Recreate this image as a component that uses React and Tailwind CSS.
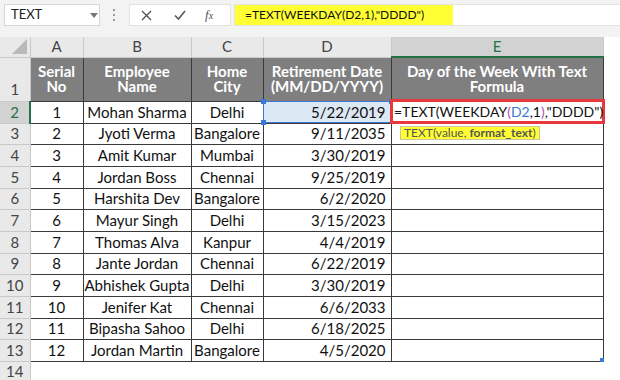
import React from 'react';

const rows = [
    [1, 'Mohan Sharma', 'Delhi', '5/22/2019'],
    [2, 'Jyoti Verma', 'Bangalore', '9/11/2035'],
    [3, 'Amit Kumar', 'Mumbai', '3/30/2019'],
    [4, 'Jordan Boss', 'Chennai', '9/25/2019'],
    [5, 'Harshita Dev', 'Bangalore', '6/2/2020'],
    [6, 'Mayur Singh', 'Delhi', '3/15/2023'],
    [7, 'Thomas Alva', 'Kanpur', '4/4/2019'],
    [8, 'Jante Jordan', 'Chennai', '6/22/2019'],
    [9, 'Abhishek Gupta', 'Delhi', '3/30/2019'],
    [10, 'Jenifer Kat', 'Chennai', '6/6/2033'],
    [11, 'Bipasha Sahoo', 'Delhi', '6/18/2025'],
    [12, 'Jordan Martin', 'Bangalore', '4/5/2020'],
];

const heights = ['h-[22px]', 'h-[21px]', 'h-[22px]', 'h-[22px]', 'h-[21px]', 'h-[22px]', 'h-[22px]', 'h-[21px]', 'h-[22px]', 'h-[22px]', 'h-[21px]', 'h-[22px]'];

const cell = 'border border-[#3a3a3a] px-0 py-0 leading-none';

const FormulaBar = () => (
    <div className="h-[37px] bg-[#f3f3f3] relative">
        {/* name box */}
        <div className="absolute left-[4px] top-[4px] w-[96px] h-[22px] bg-white border border-[#d6d6d6] flex items-center pl-[6px] text-[13px] text-[#222]">
            TEXT
            <svg className="absolute left-[85px] top-[8px]" width="8" height="5" viewBox="0 0 8 5"><path d="M0 0h8L4 5z" fill="#777" /></svg>
        </div>
        {/* dots */}
        <div className="absolute left-[113px] top-[9px] flex flex-col gap-[3px]">
            <span className="w-[2px] h-[2px] bg-[#9a9a9a]" />
            <span className="w-[2px] h-[2px] bg-[#9a9a9a]" />
            <span className="w-[2px] h-[2px] bg-[#9a9a9a]" />
        </div>
        {/* buttons */}
        <div className="absolute left-[129px] top-[4px] w-[102px] h-[22px] bg-white border border-[#e2e2e2] flex items-center">
            <svg className="ml-[11px]" width="11" height="11" viewBox="0 0 11 11"><path d="M1 1l9 9M10 1l-9 9" stroke="#555" strokeWidth="1.4" /></svg>
            <svg className="ml-[22px]" width="12" height="10" viewBox="0 0 12 10"><path d="M1 5.5l3.5 3.5L11 1" stroke="#555" strokeWidth="1.6" fill="none" /></svg>
            <span className="ml-[19px] text-[13px] text-[#555] italic" style={{ fontFamily: '"Liberation Serif", serif' }}>f<span className="text-[10px]">x</span></span>
        </div>
        {/* formula input */}
        <div className="absolute left-[234px] right-0 top-[4px] h-[22px] bg-white border-y border-l border-[#e2e2e2] flex items-center">
            <div className="h-full w-[218px] bg-[#ffff33] flex items-center pl-[10px] text-[12px] text-[#111] whitespace-nowrap">
                =TEXT(WEEKDAY(D2,1),"DDDD")
            </div>
        </div>
    </div>
);

const App = () => {
    return (
        <div className="w-[620px] h-[380px] overflow-hidden bg-white" style={{ fontFamily: 'Lato, "Liberation Sans", sans-serif' }}>
            <FormulaBar />
            <div className="relative">
                <table className="border-collapse table-fixed text-[15px] leading-none text-[#111]">
                    <colgroup>
                        <col className="w-[30px]" />
                        <col className="w-[53px]" />
                        <col className="w-[108px]" />
                        <col className="w-[72px]" />
                        <col className="w-[128px]" />
                        <col className="w-[212px]" />
                        <col className="w-[17px]" />
                    </colgroup>
                    <tbody>
                        {/* column letters */}
                        <tr className="h-[20px] bg-[#e9e9e9] text-[#444]">
                            <td className="border-r border-b border-[#c9c9c9] p-0 relative">
                                <svg className="absolute right-[3px] bottom-[3px]" width="15" height="15" viewBox="0 0 15 15"><path d="M15 0V15H0z" fill="#b9b9b9" /></svg>
                            </td>
                            {['A', 'B', 'C', 'D'].map(l => (
                                <td key={l} className="border-r border-b border-[#c9c9c9] text-center p-0">{l}</td>
                            ))}
                            <td className="bg-[#d2d2d2] border-r border-[#c9c9c9] border-b-2 border-b-[#217346] text-center text-[#217346] p-0">E</td>
                            <td className="bg-white p-0"></td>
                        </tr>
                        {/* header row 1 */}
                        <tr className="h-[44px]">
                            <td className="bg-[#e9e9e9] border-r border-b border-[#c9c9c9] text-center align-bottom pb-[4px] text-[#444] p-0">1</td>
                            <td className={`${cell} bg-[#7f7f7f] text-white font-bold text-center leading-[20px]`}>Serial<br />No</td>
                            <td className={`${cell} bg-[#7f7f7f] text-white font-bold text-center leading-[20px]`}>Employee<br />Name</td>
                            <td className={`${cell} bg-[#7f7f7f] text-white font-bold text-center leading-[20px]`}>Home<br />City</td>
                            <td className={`${cell} bg-[#7f7f7f] text-white font-bold text-center leading-[20px]`}>Retirement Date<br />(MM/DD/YYYY)</td>
                            <td className={`${cell} bg-[#7f7f7f] text-white font-bold text-center leading-[20px]`}>Day of the Week With Text<br />Formula</td>
                            <td className="p-0"></td>
                        </tr>
                        {rows.map((r, i) => (
                            <tr key={r[0]} className={heights[i]}>
                                <td className={`border-r border-b text-center p-0 ${i === 0 ? 'bg-[#d2d2d2] text-[#217346] border-r-2 border-r-[#217346] border-b-[#c9c9c9]' : 'bg-[#e9e9e9] text-[#444] border-[#c9c9c9]'}`}>{i + 2}</td>
                                <td className={`${cell} text-center`}>{r[0]}</td>
                                <td className={`${cell} text-center whitespace-nowrap`}>{r[1]}</td>
                                <td className={`${cell} text-center`}>{r[2]}</td>
                                <td className={`${cell} text-right pr-[5px] ${i === 0 ? 'bg-[#dde8f5]' : ''}`}>{r[3]}</td>
                                <td className={`${cell}`}></td>
                                <td className="p-0"></td>
                            </tr>
                        ))}
                        <tr className="h-[21px]">
                            <td className="bg-[#e9e9e9] border-r border-b border-[#c9c9c9] text-center text-[#444] p-0">14</td>
                            <td colSpan={6} className="p-0"></td>
                        </tr>
                    </tbody>
                </table>

                {/* D2 reference highlight */}
                <div className="absolute left-[263px] top-[64px] w-[129px] h-[22px] border border-[#3c78d8] pointer-events-none">
                    <span className="absolute -left-[3px] -top-[3px] w-[5px] h-[5px] bg-[#3c78d8]" />
                    <span className="absolute -left-[3px] -bottom-[3px] w-[5px] h-[5px] bg-[#3c78d8]" />
                    <span className="absolute -right-[3px] -top-[3px] w-[5px] h-[5px] bg-[#3c78d8]" />
                </div>

                {/* E2 editing cell */}
                <div className="absolute left-[390px] top-[62px] w-[215px] h-[25px] border-[3px] border-[#e8383d] bg-white flex items-center pl-[1px] text-[14px] text-[#111] whitespace-nowrap leading-none">
                    =TEXT(WEEKDAY<span className="text-[#b24fb0]">(</span><span className="text-[#3c78d8]">D2</span>,1<span className="text-[#b24fb0]">)</span>,"DDDD")
                </div>

                {/* tooltip */}
                <div className="absolute left-[400px] top-[89px] h-[14px] px-[3px] bg-[#ffff33] border border-[#c8c8a0] flex items-center text-[12px] text-[#555] whitespace-nowrap leading-none">
                    TEXT(value, <span className="font-bold ml-[3px]">format_text</span>)
                </div>

                {/* fill handle */}
                <span className="absolute left-[600px] top-[321px] w-[4px] h-[4px] bg-[#3c78d8]" />
            </div>
        </div>
    );
};

export default App;
